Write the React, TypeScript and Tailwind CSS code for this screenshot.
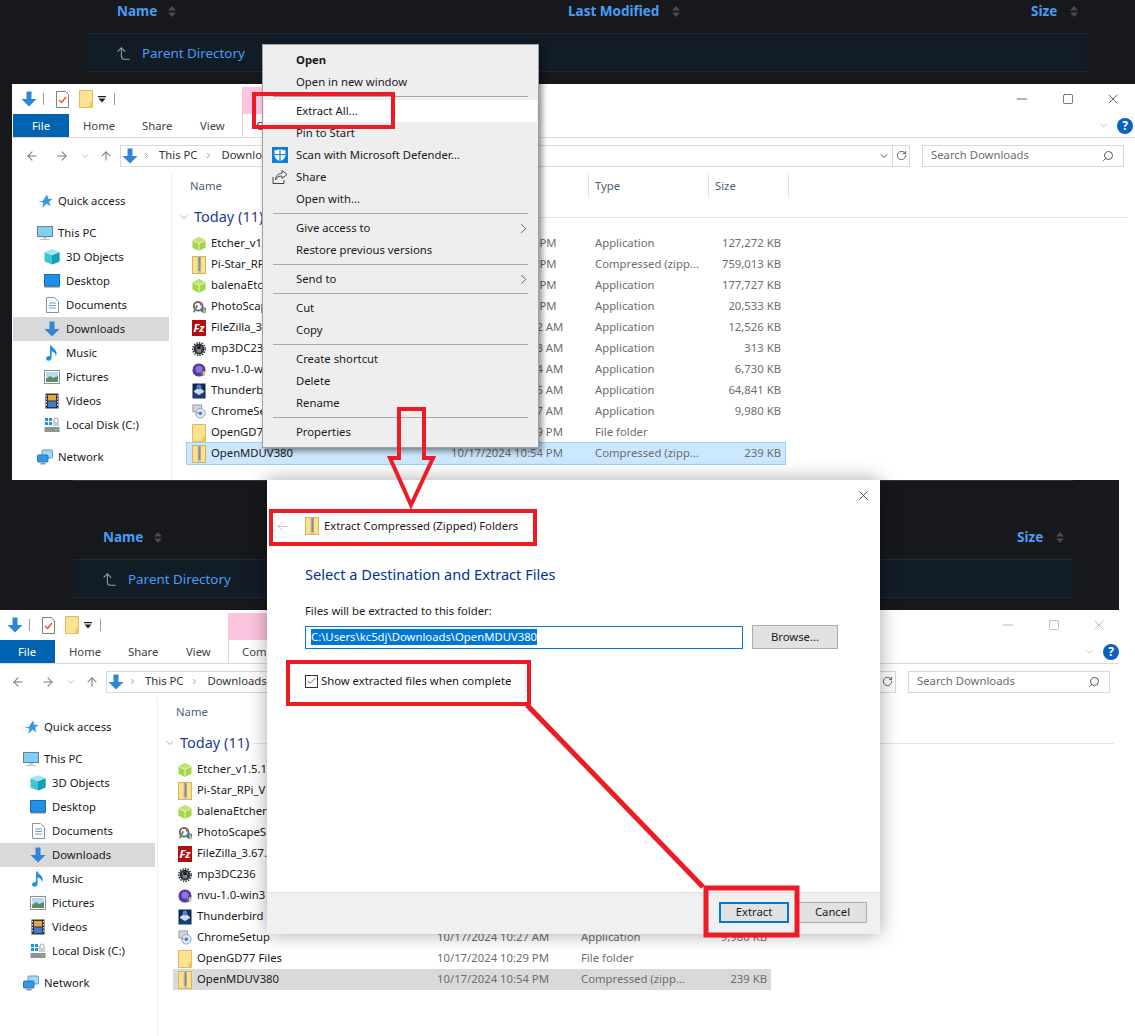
import {
  ArrowLeft,
  ArrowRight,
  ArrowUp,
  Check,
  ChevronDown,
  ChevronRight,
  CornerLeftUp,
  Minus,
  RotateCw,
  Search,
  Square,
  X,
} from "lucide-react";
import type { ReactNode } from "react";

const ArrowDownIcon = ({ size = 16 }: { size?: number }) => (
  <svg width={size} height={size} viewBox="0 0 16 16">
    <path d="M5.500 0.500h5v7.500h5L8 15.500 0.500 8h5z" fill="#2f86d9" />
  </svg>
);

const ZipIcon = () => (
  <svg width="14" height="18" viewBox="0 0 14 18">
    <rect x="0.500" y="0.500" width="13" height="17" fill="#fbe08e" stroke="#d9b25a" />
    <rect x="5.500" y="0.500" width="3.500" height="17" fill="#c9c4b6" />
    <path d="M6.500 2h2M6.500 4h2M6.500 6h2M6.500 8h2M6.500 10h2M6.500 12h2M6.500 14h2" stroke="#55524a" strokeWidth="1" />
  </svg>
);

const FolderIcon = () => (
  <svg width="14" height="18" viewBox="0 0 14 18">
    <path d="M0.500 0.500h13v17h-13z" fill="#fce294" stroke="#e0bb62" />
    <path d="M10.500 12.500h3v5h-3z" fill="#f2c75c" />
  </svg>
);

const CubeIcon = () => (
  <svg width="15" height="16" viewBox="0 0 15 16">
    <path d="M7.500 0.500l7 3.500v8l-7 3.500-7-3.500V4z" fill="#a4d64a" />
    <path d="M7.500 7.500l7-3.500-7-3.500-7 3.500z" fill="#bfe56f" />
    <path d="M7.500 7.500v8" stroke="#e8f6c9" />
    <path d="M0.500 4l7 3.500 7-3.500" stroke="#e8f6c9" fill="none" />
  </svg>
);

const PhotoScapeIcon = () => (
  <svg width="16" height="16" viewBox="0 0 16 16">
    <circle cx="7" cy="7" r="5" fill="none" stroke="#5b5b5b" strokeWidth="2" />
    <path d="M2 14l4-8" stroke="#7a7a7a" strokeWidth="2" />
    <path d="M8 3l4 1-2 3z" fill="#e2622b" />
    <path d="M10 9l3-1 3 1v4l-3 2-3-2z" fill="#2f7fd1" />
    <path d="M13 8v7h3v-2z" fill="#f4c430" />
  </svg>
);

const FileZillaIcon = () => (
  <span className="flex h-[16px] w-[16px] items-center justify-center bg-[#b30f0f] text-[11px] font-bold italic leading-none text-white">
    Fz
  </span>
);

const GearIcon = () => (
  <svg width="16" height="16" viewBox="0 0 16 16">
    <circle cx="8" cy="8" r="6.200" fill="#2f333d" />
    <circle cx="8" cy="8" r="7.200" fill="none" stroke="#1f222a" strokeWidth="1.600" strokeDasharray="1.600 1.400" />
    <path d="M4.500 5h7l-1.200 7H5.700z" fill="#7d8494" />
    <rect x="6" y="5" width="4" height="3" fill="#14161b" />
  </svg>
);

const NvuIcon = () => (
  <svg width="16" height="16" viewBox="0 0 16 16">
    <circle cx="8" cy="8" r="7.500" fill="#5b36a8" />
    <circle cx="8" cy="7" r="4" fill="#8f74d6" />
    <path d="M10 10l3-1 2 1v3l-2 2-3-2z" fill="#2f7fd1" />
    <path d="M12.500 9v6l2.500-2v-3z" fill="#f4c430" />
  </svg>
);

const ThunderbirdIcon = () => (
  <svg width="14" height="16" viewBox="0 0 14 16">
    <rect x="0.500" y="0.500" width="13" height="15" fill="#0f2a55" />
    <path d="M2 15V8l5-4 5 4v7z" fill="#d3dcec" />
    <path d="M2 9l5 3 5-3v6H2z" fill="#1c3f7a" />
    <circle cx="7" cy="4" r="2.500" fill="#4f7fd0" />
  </svg>
);

const SetupIcon = () => (
  <svg width="16" height="17" viewBox="0 0 16 17">
    <path d="M1 1h10v8H1z" fill="#cfd6de" stroke="#8a939c" />
    <circle cx="9.500" cy="10.500" r="5.500" fill="#dfe6ee" stroke="#7f9dc9" />
    <circle cx="9.500" cy="10.500" r="2" fill="#3f7fd4" />
    <path d="M4.500 10l3 0" stroke="#e39b2f" strokeWidth="1.500" />
  </svg>
);

const StarIcon = () => (
  <svg width="15" height="15" viewBox="0 0 15 15">
    <path d="M9 0.500l1.400 4.200 4.100.3-3.300 2.700 1.100 4.600L8.500 9.800 4.300 14l1-5.200L0.500 7h4.200z" fill="#3b9ae1" />
  </svg>
);

const MonitorIcon = () => (
  <svg width="16" height="16" viewBox="0 0 16 16">
    <rect x="0.500" y="1.500" width="15" height="10" fill="#7fd0f5" stroke="#6d7f8f" />
    <path d="M6 12h4v1.500H6zM3.500 14h9v1h-9z" fill="#b6c2cc" />
  </svg>
);

const Cube3dIcon = () => (
  <svg width="16" height="16" viewBox="0 0 16 16">
    <path d="M8 0.500l7.500 3v9L8 15.500l-7.500-3v-9z" fill="#3fc4d6" />
    <path d="M8 6.500l7.500-3L8 0.500l-7.500 3z" fill="#9be8ef" />
    <path d="M8 6.500v9l7.500-3v-9z" fill="#169fb8" />
  </svg>
);

const DesktopIcon = () => (
  <svg width="16" height="14" viewBox="0 0 16 14">
    <rect x="0.500" y="0.500" width="15" height="11.500" fill="#1e90e8" stroke="#136bb0" />
    <rect x="0.500" y="12" width="15" height="1.500" fill="#6d7f8f" />
  </svg>
);

const DocumentIcon = () => (
  <svg width="13" height="16" viewBox="0 0 13 16">
    <path d="M0.500 0.500h8l4 4v11h-12z" fill="#fff" stroke="#8a939c" />
    <path d="M3 6h7M3 8.500h7M3 11h7" stroke="#5aa3dc" />
  </svg>
);

const MusicIcon = () => (
  <svg width="14" height="16" viewBox="0 0 14 16">
    <path d="M5 0.500h1.600c.4 2.500 5 3.500 5 8 0 1-.3 2-.8 2.800.2-2.800-2-4.300-4.200-5V13c0 1.600-1.600 2.700-3.200 2.700C1.900 15.700 1 14.800 1 13.600 1 12 2.600 11 4.200 11c.3 0 .6 0 .8.1z" fill="#1e90e8" />
  </svg>
);

const PicturesIcon = () => (
  <svg width="16" height="14" viewBox="0 0 16 14">
    <rect x="0.500" y="0.500" width="15" height="13" fill="#fff" stroke="#8a939c" />
    <rect x="2" y="2" width="12" height="10" fill="#b7dcef" />
    <path d="M2 9l4-3 3 2 5-2v6H2z" fill="#5f8b6a" />
  </svg>
);

const VideosIcon = () => (
  <svg width="14" height="16" viewBox="0 0 14 16">
    <rect x="0.500" y="0.500" width="13" height="15" fill="#30343b" />
    <rect x="3" y="2" width="8" height="5.500" fill="#e8a53a" />
    <rect x="3" y="8.500" width="8" height="5.500" fill="#3a7ed0" />
    <path d="M1.500 2v12M12.500 2v12" stroke="#d9d9d9" strokeDasharray="1.500 1.500" />
  </svg>
);

const DiskIcon = () => (
  <svg width="16" height="16" viewBox="0 0 16 16">
    <path d="M1 1h3v3H1zM1 5h3v3H1zM5 1h3v3H5zM5 5h3v3H5z" fill="#1e90e8" />
    <path d="M10 5V3a2 2 0 0 1 4 0v2" stroke="#9aa3ab" fill="none" />
    <rect x="9" y="5" width="6" height="4" fill="#c9ced3" />
    <rect x="0.500" y="10" width="15" height="5" fill="#8d9399" />
    <rect x="11" y="12" width="3" height="1.500" fill="#64d24b" />
  </svg>
);

const NetworkIcon = () => (
  <svg width="16" height="16" viewBox="0 0 16 16">
    <rect x="5" y="1" width="10.500" height="8" rx="1" fill="#a7d8f5" stroke="#5d9ccd" />
    <rect x="0.500" y="6" width="10.500" height="7" rx="1" fill="#2f9be8" stroke="#2677b5" />
    <path d="M3.500 14h5v1.500h-5z" fill="#8d9399" />
  </svg>
);

const NotesIcon = () => (
  <svg width="13" height="17" viewBox="0 0 13 17">
    <path d="M0.500 0.500h9l3 3v13h-12z" fill="#fff" stroke="#7d7d7d" />
    <path d="M3 9l2.500 2.500L10 6" stroke="#e0552b" strokeWidth="1.400" fill="none" />
  </svg>
);

const CustomizeIcon = () => (
  <svg width="8" height="8" viewBox="0 0 8 8">
    <path d="M0 1h8v1.200H0zM0.500 3.500h7L4 7.500z" fill="#222" />
  </svg>
);

const SortIcon = () => (
  <svg width="8" height="11" viewBox="0 0 8 11">
    <path d="M4 0l4 4.500H0zM4 11L0 6.500h8z" fill="#484c52" />
  </svg>
);

const ShieldIcon = () => (
  <svg width="16" height="16" viewBox="0 0 16 16">
    <rect width="16" height="16" fill="#0f7fd8" />
    <path d="M8 2c2 1 3.500 1.300 5.500 1.300V8c0 3-2.500 4.800-5.500 6.200C5 12.800 2.500 11 2.500 8V3.300C4.500 3.300 6 3 8 2z" fill="#fff" />
    <path d="M8 2v12.200M2.500 7.500h11" stroke="#0f7fd8" strokeWidth="1.200" />
  </svg>
);

const ShareIcon = () => (
  <svg width="16" height="16" viewBox="0 0 16 16" fill="none" stroke="#444" strokeWidth="1">
    <path d="M1 8v6.500h11V11" />
    <path d="M10 1.500l5 4-5 4V7C7 7 4.500 8 3.500 11c0-4 2.500-6.500 6.500-6.700z" />
  </svg>
);

const files = [
  { name: "Etcher_v1.5.1", date: "10/17/2024 9:12 PM", type: "Application", size: "127,272 KB", icon: <CubeIcon /> },
  { name: "Pi-Star_RPi_V", date: "10/17/2024 9:15 PM", type: "Compressed (zipp...", size: "759,013 KB", icon: <ZipIcon /> },
  { name: "balenaEtcher-", date: "10/17/2024 9:18 PM", type: "Application", size: "177,727 KB", icon: <CubeIcon /> },
  { name: "PhotoScapeS", date: "10/17/2024 9:21 PM", type: "Application", size: "20,533 KB", icon: <PhotoScapeIcon /> },
  { name: "FileZilla_3.67.", date: "10/17/2024 10:22 AM", type: "Application", size: "12,526 KB", icon: <FileZillaIcon /> },
  { name: "mp3DC236", date: "10/17/2024 10:23 AM", type: "Application", size: "313 KB", icon: <GearIcon /> },
  { name: "nvu-1.0-win3", date: "10/17/2024 10:24 AM", type: "Application", size: "6,730 KB", icon: <NvuIcon /> },
  { name: "Thunderbird", date: "10/17/2024 10:25 AM", type: "Application", size: "64,841 KB", icon: <ThunderbirdIcon /> },
  { name: "ChromeSetup", date: "10/17/2024 10:27 AM", type: "Application", size: "9,980 KB", icon: <SetupIcon /> },
  { name: "OpenGD77 Files", date: "10/17/2024 10:29 PM", type: "File folder", size: "", icon: <FolderIcon /> },
  { name: "OpenMDUV380", date: "10/17/2024 10:54 PM", type: "Compressed (zipp...", size: "239 KB", icon: <ZipIcon /> },
];

const navItems = [
  { label: "3D Objects", icon: <Cube3dIcon /> },
  { label: "Desktop", icon: <DesktopIcon /> },
  { label: "Documents", icon: <DocumentIcon /> },
  { label: "Downloads", icon: <ArrowDownIcon />, active: true },
  { label: "Music", icon: <MusicIcon /> },
  { label: "Pictures", icon: <PicturesIcon /> },
  { label: "Videos", icon: <VideosIcon /> },
  { label: "Local Disk (C:)", icon: <DiskIcon /> },
];

const NavRow = ({ icon, label, active, top }: { icon: ReactNode; label: string; active?: boolean; top?: boolean }) => (
  <div
    className={`ml-px flex h-[24px] w-[156px] items-center text-[#1a1a1a] ${
      top ? "gap-[5px] pl-[24px]" : "gap-[6px] pl-[31px]"
    } ${active ? "bg-[#d9d9d9]" : ""}`}
  >
    <span className="flex w-[16px] justify-center">{icon}</span>
    <span>{label}</span>
  </div>
);

const DarkHeader = () => (
  <div className="ml-[87px] w-[1000px]">
    <div className="grid h-[23px] grid-cols-[481px_463px_56px] items-center text-[13.5px] font-bold text-[#4a9df5]">
      <div className="flex items-center gap-[11px] pl-[30px]">
        Name <SortIcon />
      </div>
      <div className="flex items-center gap-[13px]">
        Last Modified <SortIcon />
      </div>
      <div className="flex items-center gap-[13px]">
        Size <SortIcon />
      </div>
    </div>
    <div className="mt-[10px] flex h-[39px] items-center gap-[10px] border-y border-[#1f2a36] bg-[#121c27] pl-[28px] pt-px text-[13.4px] text-[#4a9df5]">
      <CornerLeftUp size={17} strokeWidth={1.5} className="text-[#8fa0b2]" />
      Parent Directory
    </div>
  </div>
);

const ExplorerWindow = ({ focused, className }: { focused: boolean; className: string }) => {
  const control = focused ? "text-[#222]" : "text-[#999]";
  return (
    <div className={`w-[1123px] overflow-hidden bg-white text-[11.3px] ${className}`}>
      {/* quick access bar */}
      <div className="relative flex h-[30px] items-center pl-[9px]">
        <ArrowDownIcon />
        <div className="ml-[6px] h-[12px] w-px bg-[#9a9a9a]" />
        <div className="ml-[12px]">
          <NotesIcon />
        </div>
        <div className="ml-[10px]">
          <FolderIcon />
        </div>
        <div className="ml-[5px] flex">
          <CustomizeIcon />
        </div>
        <div className="ml-[8px] h-[12px] w-px bg-[#9a9a9a]" />
        <div className="ml-[127px] mt-[3px] h-[27px] w-[120px] self-start bg-[#fcc4de]" />
        <div className={`ml-auto mr-[14px] flex items-center gap-[31.500px] ${control}`}>
          <Minus size={16} strokeWidth={1} />
          <Square size={12} strokeWidth={1.200} />
          <X size={16} strokeWidth={1} />
        </div>
      </div>
      {/* ribbon tabs */}
      <div className="flex h-[24px] items-center border-b border-[#dadada] text-[#444]">
        <div className="ml-px flex h-[23px] w-[56px] items-center justify-center bg-[#0063b1] pt-px text-white">File</div>
        <span className="ml-[14px] w-[59px] pt-px">Home</span>
        <span className="w-[58px] pt-px">Share</span>
        <span className="w-[42px] pt-px">View</span>
        <div className="flex h-full items-center border-l border-[#dadada] pl-[13px] pt-px">Compressed Folder Tools</div>
        <ChevronDown size={13} strokeWidth={1} className="ml-auto mr-[7px] text-[#999]" />
        <div className="mr-[2px] flex h-[16px] w-[16px] items-center justify-center rounded-full bg-[#0a62bd] text-[12px] font-bold text-white">
          ?
        </div>
      </div>
      {/* address bar */}
      <div className="flex h-[35px] items-center">
        <ArrowLeft size={14} strokeWidth={1.800} className="ml-[13px] text-[#777]" />
        <ArrowRight size={14} strokeWidth={1.800} className="ml-[16px] text-[#777]" />
        <ChevronDown size={10} strokeWidth={1.600} className="ml-[11px] text-[#999]" />
        <ArrowUp size={14} strokeWidth={1.800} className="ml-[9px] text-[#777]" />
        <div className="ml-[7px] flex h-[22px] w-[790px] items-center border border-[#d9d9d9] text-[#333]">
          <span className="ml-px flex">
            <ArrowDownIcon />
          </span>
          <ChevronRight size={9} className="ml-[4px] text-[#777]" />
          <span className="ml-[8px]">This PC</span>
          <ChevronRight size={9} className="ml-[6px] text-[#777]" />
          <span className="ml-[9px]">Downloads</span>
          <ChevronDown size={12} strokeWidth={2} className="ml-auto mr-[2px] text-[#555]" />
          <div className="flex h-full w-[17px] items-center justify-center border-l border-[#d9d9d9]">
            <RotateCw size={11} className="text-[#555]" />
          </div>
        </div>
        <div className="ml-[12px] flex h-[22px] w-[202px] items-center justify-between border border-[#d9d9d9] pl-[8px] pr-[9px] text-[#6d6d6d]">
          Search Downloads
          <Search size={12} strokeWidth={2} className="-scale-x-100 text-[#555]" />
        </div>
      </div>
      <div className="flex h-[500px]">
        {/* nav pane */}
        <div className="w-[160px] shrink-0 border-r border-[#efefef] pt-[16px]">
          <NavRow top icon={<StarIcon />} label="Quick access" />
          <div className="mt-[8px]">
            <NavRow top icon={<MonitorIcon />} label="This PC" />
          </div>
          {navItems.map((item) => (
            <NavRow key={item.label} icon={item.icon} label={item.label} active={item.active} />
          ))}
          <div className="mt-[8px]">
            <NavRow top icon={<NetworkIcon />} label="Network" />
          </div>
        </div>
        {/* file list */}
        <div className="flex-1">
          <div className="ml-[15px] flex h-[25px] w-[602px] text-[#4c607a]">
            <div className="flex w-[264px] items-center pl-[3px] pt-[2px]">Name</div>
            <div className="flex w-[137px] items-center border-l border-[#e5e5e5] pl-[6px] pt-[2px]">Date modified</div>
            <div className="flex w-[120px] items-center border-l border-[#e5e5e5] pl-[6px] pt-[2px]">Type</div>
            <div className="flex w-[81px] items-center border-x border-[#e5e5e5] pl-[6px] pt-[2px]">Size</div>
          </div>
          <div className="ml-[6px] mr-[7px] mt-[7px] flex h-[24px] items-center gap-[4px]">
            <ChevronDown size={12} strokeWidth={1} className="text-[#555]" />
            <span className="text-[14.500px] text-[#1e3a9a]">Today (11)</span>
            <div className="h-px flex-1 bg-[#e5e5e5]" />
          </div>
          <div className="ml-[15px] mt-[4px] w-[598px]">
            {files.map((file) => {
              const selected = file.name === "OpenMDUV380";
              return (
                <div
                  key={file.name}
                  className={`grid h-[21px] grid-cols-[264px_144px_113px_77px] items-center ${
                    selected ? (focused ? "bg-[#cce8ff] outline outline-[#99d1ff]" : "bg-[#d9d9d9]") : ""
                  }`}
                >
                  <div className="flex items-center gap-[5px] pl-[5px] text-[#1a1a1a]">
                    <span className="flex w-[14px] shrink-0 justify-center">{file.icon}</span>
                    <span className="whitespace-nowrap">{file.name}</span>
                  </div>
                  <span className="text-[#6d6d6d]">{file.date}</span>
                  <span className="text-[#6d6d6d]">{file.type}</span>
                  <span className="pr-[4px] text-right text-[#6d6d6d]">{file.size}</span>
                </div>
              );
            })}
          </div>
        </div>
      </div>
    </div>
  );
};

const menuGroups = [
  [{ label: "Open", bold: true }, { label: "Open in new window" }],
  [
    { label: "Extract All...", hot: true },
    { label: "Pin to Start" },
    { label: "Scan with Microsoft Defender...", icon: <ShieldIcon /> },
    { label: "Share", icon: <ShareIcon /> },
    { label: "Open with..." },
  ],
  [{ label: "Give access to", more: true }, { label: "Restore previous versions" }],
  [{ label: "Send to", more: true }],
  [{ label: "Cut" }, { label: "Copy" }],
  [{ label: "Create shortcut" }, { label: "Delete" }, { label: "Rename" }],
  [{ label: "Properties" }],
];

const ContextMenu = () => (
  <div className="absolute left-[262px] top-[44px] h-[404px] w-[277px] border border-[#a0a0a0] bg-[#eeeeee] py-[4px] pl-px pr-px text-[11.300px] text-[#1a1a1a] shadow-[3px_3px_6px_rgba(0,0,0,0.45)]">
    {menuGroups.map((group, i) => (
      <div key={i}>
        {i > 0 && <div className="mx-[9px] my-[3px] h-px bg-[#a8a8a8]" />}
        {group.map((item: { label: string; bold?: boolean; hot?: boolean; more?: boolean; icon?: ReactNode }) => (
          <div
            key={item.label}
            className={`relative flex h-[22px] items-center pl-[32px] ${item.hot ? "bg-white" : ""} ${
              item.bold ? "font-bold" : ""
            }`}
          >
            {item.icon && <span className="absolute left-[8px] flex">{item.icon}</span>}
            {item.label}
            {item.more && (
              <ChevronRight size={17} strokeWidth={1} className="absolute right-[5px] text-[#333]" />
            )}
          </div>
        ))}
      </div>
    ))}
  </div>
);

const ExtractDialog = () => (
  <div className="absolute left-[267px] top-[480px] flex h-[454px] w-[613px] flex-col bg-white text-[11.300px] text-[#1a1a1a] shadow-[0_0_18px_rgba(0,0,0,0.35)]">
    <div className="flex h-[30px] items-center justify-end pr-[9px]">
      <X size={15} strokeWidth={1.200} className="text-[#222]" />
    </div>
    <div className="flex h-[32px] items-center pl-[8px]">
      <ArrowLeft size={15} strokeWidth={1.600} className="text-[#c8c8c8]" />
      <span className="ml-[15px] flex">
        <ZipIcon />
      </span>
      <span className="ml-[5px]">Extract Compressed (Zipped) Folders</span>
    </div>
    <div className="flex-1 pl-[38px] pr-[42px]">
      <div className="mt-[22px] flex h-[22px] items-center text-[14.600px] text-[#003399]">
        Select a Destination and Extract Files
      </div>
      <div className="mt-[17px] flex h-[16px] items-center">Files will be extracted to this folder:</div>
      <div className="mt-[6px] flex items-center gap-[9px]">
        <div className="flex h-[23px] w-[438px] items-center border border-[#0078d7] pl-[5px]">
          <span className="bg-[#0078d7] text-white">C:\Users\kc5dj\Downloads\OpenMDUV380</span>
        </div>
        <div className="flex h-[24px] w-[86px] items-center justify-center border border-[#adadad] bg-[#e1e1e1]">
          Browse...
        </div>
      </div>
      <div className="mt-[24px] flex h-[16px] items-center gap-[3px]">
        <span className="flex h-[13px] w-[13px] items-center justify-center border border-[#333]">
          <Check size={12} strokeWidth={1.500} className="text-[#222]" />
        </span>
        Show extracted files when complete
      </div>
    </div>
    <div className="flex h-[42px] items-center justify-end gap-[9px] border-t border-[#dfdfdf] bg-[#f0f0f0] pb-[2px] pr-[13px]">
      <div className="flex h-[21px] w-[70px] items-center justify-center border-2 border-[#0078d7] bg-[#e1e1e1]">
        Extract
      </div>
      <div className="flex h-[21px] w-[69px] items-center justify-center border border-[#adadad] bg-[#e1e1e1]">
        Cancel
      </div>
    </div>
  </div>
);

// red call-outs drawn over the screenshots
const Annotations = () => (
  <svg className="pointer-events-none absolute left-0 top-0" width="1135" height="1036" fill="none" stroke="#ed1c24" strokeWidth="4">
    <rect x="254" y="94" width="139" height="33" />
    <rect x="271" y="511" width="264" height="33" />
    <rect x="288" y="662" width="241" height="42" />
    <rect x="706" y="888" width="91" height="47" strokeWidth="5" />
    <path d="M399 409h25v49h9l-22 47-21-47h9z" />
    <path d="M527 705L703 887" strokeWidth="5" />
  </svg>
);

export default function App() {
  return (
    <div className="relative h-[1036px] w-[1135px] overflow-hidden bg-white font-['Noto_Sans',sans-serif]">
      {/* first capture */}
      <div className="absolute left-0 top-0 flex h-[480px] w-[1135px] flex-col overflow-hidden bg-[#16181c]">
        <div className="h-[84px] shrink-0">
          <DarkHeader />
        </div>
        <ExplorerWindow focused className="ml-[12px] flex-1" />
      </div>
      {/* second capture, same layout shifted left and cut at the right */}
      <div className="absolute left-[-14px] top-[480px] flex h-[556px] w-[1133px] flex-col overflow-hidden bg-[#16181c]">
        <div className="h-[130px] shrink-0">
          <div className="mb-[45px] ml-[87px] h-px w-[1000px] bg-[#33373c]" />
          <DarkHeader />
        </div>
        <ExplorerWindow focused={false} className="ml-[12px] flex-1" />
      </div>
      <ContextMenu />
      <ExtractDialog />
      <Annotations />
    </div>
  );
}
